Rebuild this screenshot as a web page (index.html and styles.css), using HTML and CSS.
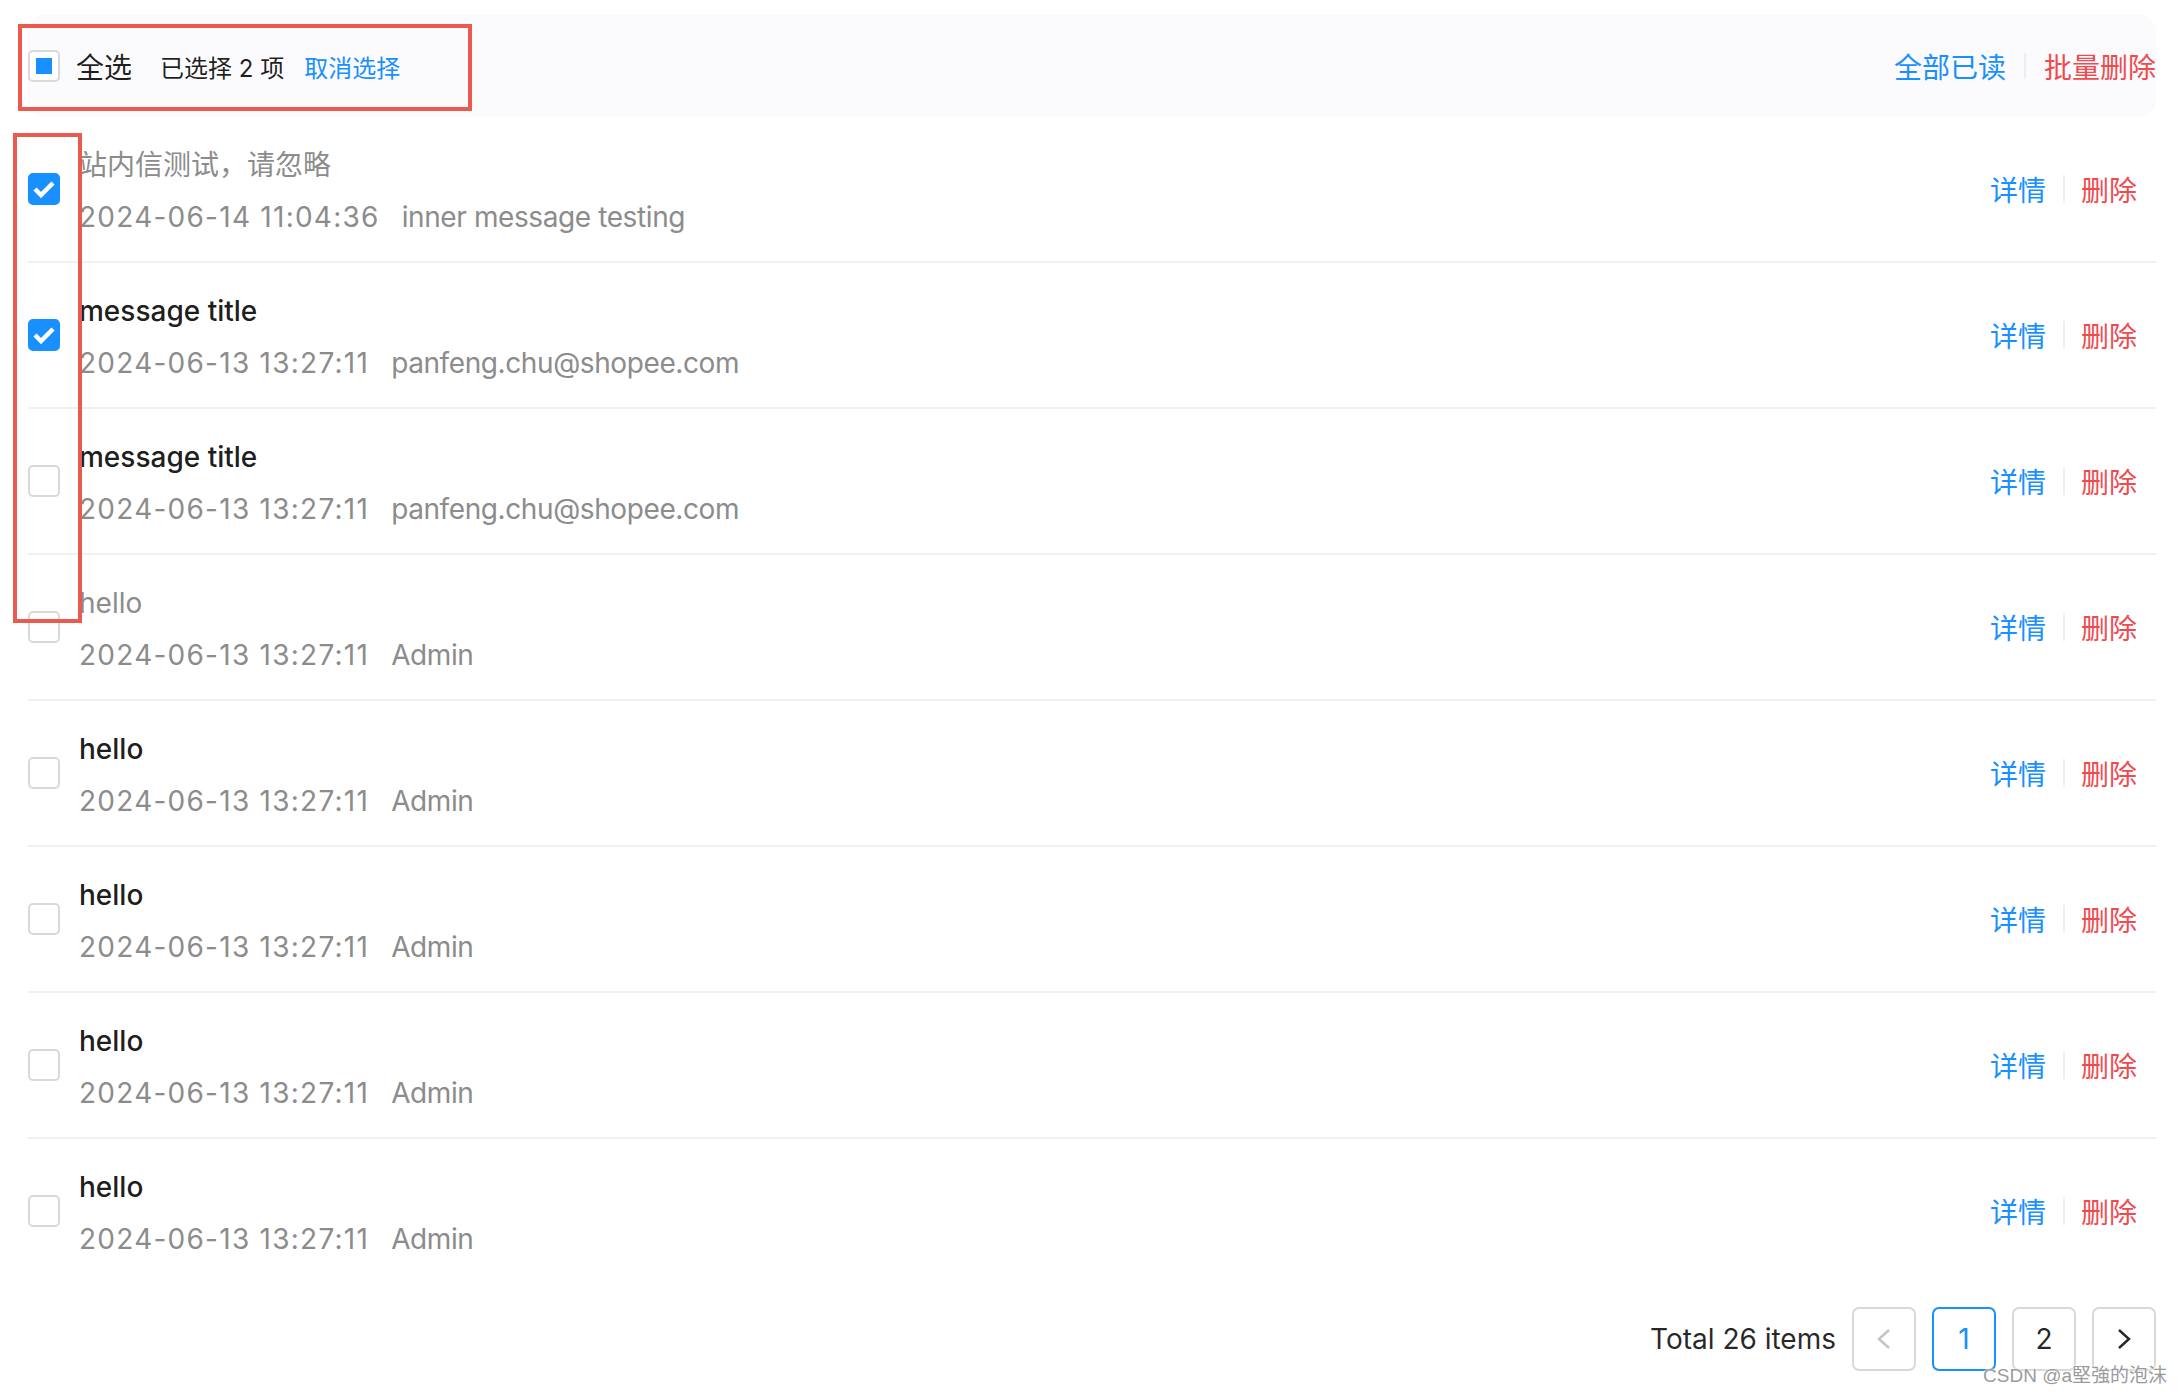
FILE: index.html
```html
<!doctype html>
<html lang="zh-CN">
  <head>
    <meta charset="UTF-8" />
    <meta name="viewport" content="width=device-width, initial-scale=1.0" />
    <title>站内信</title>
    <link rel="stylesheet" href="styles.css">
  </head>

  <body>
    <div class="page">
      <div class="toolbar">
        <div class="toolbar-left">
          <span class="checkbox is-indeterminate"></span>
          <span class="check-label">全选</span>
          <span class="selected-info">已选择 2 项</span>
          <a class="link-cancel">取消选择</a>
        </div>
        <div class="toolbar-actions">
          <a class="link">全部已读</a>
          <span class="split"></span>
          <a class="link link-danger">批量删除</a>
        </div>
      </div>

      <ul class="msg-list">
        <li class="msg-item">
          <span class="checkbox is-checked">
            <svg viewBox="0 0 32 32" width="32" height="32"><polyline points="7,16 13,22 25,10" /></svg>
          </span>
          <div class="msg-body">
            <div class="msg-title is-read">站内信测试，请忽略</div>
            <div class="msg-meta"><span class="msg-time">2024-06-14 11:04:36</span><span class="msg-sender">inner message testing</span></div>
          </div>
          <div class="msg-actions">
            <a class="link">详情</a>
            <span class="split split-sm"></span>
            <a class="link link-danger">删除</a>
          </div>
        </li>
        <li class="msg-item">
          <span class="checkbox is-checked">
            <svg viewBox="0 0 32 32" width="32" height="32"><polyline points="7,16 13,22 25,10" /></svg>
          </span>
          <div class="msg-body">
            <div class="msg-title">message title</div>
            <div class="msg-meta"><span class="msg-time">2024-06-13 13:27:11</span><span class="msg-sender">panfeng.chu@shopee.com</span></div>
          </div>
          <div class="msg-actions">
            <a class="link">详情</a>
            <span class="split split-sm"></span>
            <a class="link link-danger">删除</a>
          </div>
        </li>
        <li class="msg-item">
          <span class="checkbox"></span>
          <div class="msg-body">
            <div class="msg-title">message title</div>
            <div class="msg-meta"><span class="msg-time">2024-06-13 13:27:11</span><span class="msg-sender">panfeng.chu@shopee.com</span></div>
          </div>
          <div class="msg-actions">
            <a class="link">详情</a>
            <span class="split split-sm"></span>
            <a class="link link-danger">删除</a>
          </div>
        </li>
        <li class="msg-item">
          <span class="checkbox"></span>
          <div class="msg-body">
            <div class="msg-title is-read">hello</div>
            <div class="msg-meta"><span class="msg-time">2024-06-13 13:27:11</span><span class="msg-sender">Admin</span></div>
          </div>
          <div class="msg-actions">
            <a class="link">详情</a>
            <span class="split split-sm"></span>
            <a class="link link-danger">删除</a>
          </div>
        </li>
        <li class="msg-item">
          <span class="checkbox"></span>
          <div class="msg-body">
            <div class="msg-title">hello</div>
            <div class="msg-meta"><span class="msg-time">2024-06-13 13:27:11</span><span class="msg-sender">Admin</span></div>
          </div>
          <div class="msg-actions">
            <a class="link">详情</a>
            <span class="split split-sm"></span>
            <a class="link link-danger">删除</a>
          </div>
        </li>
        <li class="msg-item">
          <span class="checkbox"></span>
          <div class="msg-body">
            <div class="msg-title">hello</div>
            <div class="msg-meta"><span class="msg-time">2024-06-13 13:27:11</span><span class="msg-sender">Admin</span></div>
          </div>
          <div class="msg-actions">
            <a class="link">详情</a>
            <span class="split split-sm"></span>
            <a class="link link-danger">删除</a>
          </div>
        </li>
        <li class="msg-item">
          <span class="checkbox"></span>
          <div class="msg-body">
            <div class="msg-title">hello</div>
            <div class="msg-meta"><span class="msg-time">2024-06-13 13:27:11</span><span class="msg-sender">Admin</span></div>
          </div>
          <div class="msg-actions">
            <a class="link">详情</a>
            <span class="split split-sm"></span>
            <a class="link link-danger">删除</a>
          </div>
        </li>
        <li class="msg-item">
          <span class="checkbox"></span>
          <div class="msg-body">
            <div class="msg-title">hello</div>
            <div class="msg-meta"><span class="msg-time">2024-06-13 13:27:11</span><span class="msg-sender">Admin</span></div>
          </div>
          <div class="msg-actions">
            <a class="link">详情</a>
            <span class="split split-sm"></span>
            <a class="link link-danger">删除</a>
          </div>
        </li>
      </ul>

      <div class="pagination">
        <span class="total">Total 26 items</span>
        <span class="page-btn is-disabled">
          <svg viewBox="0 0 14 20" width="14" height="20"><polyline points="12,1 2,10 12,19" /></svg>
        </span>
        <span class="page-btn is-active">1</span>
        <span class="page-btn">2</span>
        <span class="page-btn">
          <svg viewBox="0 0 14 20" width="14" height="20"><polyline points="2,1 12,10 2,19" /></svg>
        </span>
      </div>
    </div>

    <!-- annotation marks -->
    <div class="mark mark-toolbar"></div>
    <div class="mark mark-checks"></div>
    <div class="watermark">CSDN @a堅強的泡沫</div>
  </body>
</html>
```

FILE: styles.css
```css
html,
body {
  margin: 0;
  padding: 0;
}

body {
  position: relative;
  width: 2184px;
  height: 1396px;
  overflow: hidden;
  background: #fff;
  font-family: Inter, 'Noto Sans CJK SC', sans-serif;
  color: rgba(0, 0, 0, 0.88);
}

.page {
  padding: 15px 28px 0;
}

/* toolbar */
.toolbar {
  display: flex;
  align-items: center;
  justify-content: space-between;
  height: 102px;
  background: #fbfafd;
  border-radius: 16px;
}

.toolbar-left {
  display: flex;
  align-items: center;
}

.check-label {
  margin-left: 16px;
  font-size: 28px;
}

.selected-info {
  margin-left: 28px;
  font-size: 24px;
}

.link-cancel {
  margin-left: 20px;
  font-size: 24px;
  color: #1890ff;
}

.toolbar-actions {
  display: flex;
  align-items: center;
  font-size: 28px;
}

.link {
  color: #1890ff;
  cursor: pointer;
}

.link-danger {
  color: #ef4b4f;
}

.split {
  width: 2px;
  height: 26px;
  margin: 0 18px;
  background: #eeeeee;
}

.split-sm {
  height: 28px;
  margin: 0 16px 0 17px;
}

/* checkbox */
.checkbox {
  position: relative;
  flex: none;
  box-sizing: border-box;
  width: 32px;
  height: 32px;
  border: 2px solid #d9d9d9;
  border-radius: 5px;
  background: #fff;
}

.checkbox.is-checked {
  background: #1890ff;
  border-color: #1890ff;
}

.checkbox svg {
  position: absolute;
  left: -2px;
  top: -2px;
}

.checkbox svg polyline {
  fill: none;
  stroke: #fff;
  stroke-width: 4.5;
}

.checkbox.is-indeterminate::after {
  content: '';
  position: absolute;
  left: 6px;
  top: 6px;
  width: 16px;
  height: 16px;
  background: #1890ff;
}

/* list */
.msg-list {
  list-style: none;
  margin: 0;
  padding: 0;
}

.msg-item {
  display: flex;
  align-items: center;
  padding: 24px 0;
  border-bottom: 2px solid #f0f0f0;
}

.msg-item:last-child {
  border-bottom: none;
}

.msg-body {
  flex: 1;
  min-width: 0;
  margin-left: 19px;
  padding-top: 2px;
  margin-bottom: -2px;
}

.msg-title {
  margin-bottom: 8px;
  font-size: 28px;
  line-height: 44px;
  font-weight: 500;
  color: rgba(0, 0, 0, 0.9);
}

.msg-title.is-read {
  font-weight: 400;
  color: #8c8c8c;
}

.msg-meta {
  font-size: 28px;
  line-height: 44px;
  color: #8c8c8c;
}

.msg-time {
  letter-spacing: 1.25px;
}

.msg-sender {
  margin-left: 22px;
  letter-spacing: -0.4px;
}

.msg-actions {
  display: flex;
  align-items: center;
  margin-right: 19px;
  font-size: 28px;
}

/* pagination */
.pagination {
  display: flex;
  align-items: center;
  justify-content: flex-end;
  gap: 16px;
  margin-top: 24px;
}

.total {
  font-size: 28px;
  color: rgba(0, 0, 0, 0.85);
}

.page-btn {
  display: flex;
  align-items: center;
  justify-content: center;
  box-sizing: border-box;
  width: 64px;
  height: 64px;
  border: 2px solid #d9d9d9;
  border-radius: 7px;
  font-size: 28px;
  color: rgba(0, 0, 0, 0.85);
}

.page-btn.is-active {
  border-color: #1890ff;
  color: #1890ff;
}

.page-btn svg polyline {
  fill: none;
  stroke: #262626;
  stroke-width: 2.4;
}

.page-btn.is-disabled svg polyline {
  stroke: #c4c4c4;
}

/* annotation marks */
.mark {
  position: absolute;
  box-sizing: border-box;
  border: 4px solid #eb5a4f;
}

.mark-toolbar {
  left: 18px;
  top: 24px;
  width: 454px;
  height: 87px;
}

.mark-checks {
  left: 13px;
  top: 133px;
  width: 69px;
  height: 490px;
}

.watermark {
  position: absolute;
  right: 17px;
  top: 1360px;
  font-family: 'Liberation Sans', 'Noto Sans CJK TC', sans-serif;
  font-size: 19px;
  color: #9b9b9b;
  text-shadow: 0 0 2px #fff, 0 0 2px #fff;
}
```
